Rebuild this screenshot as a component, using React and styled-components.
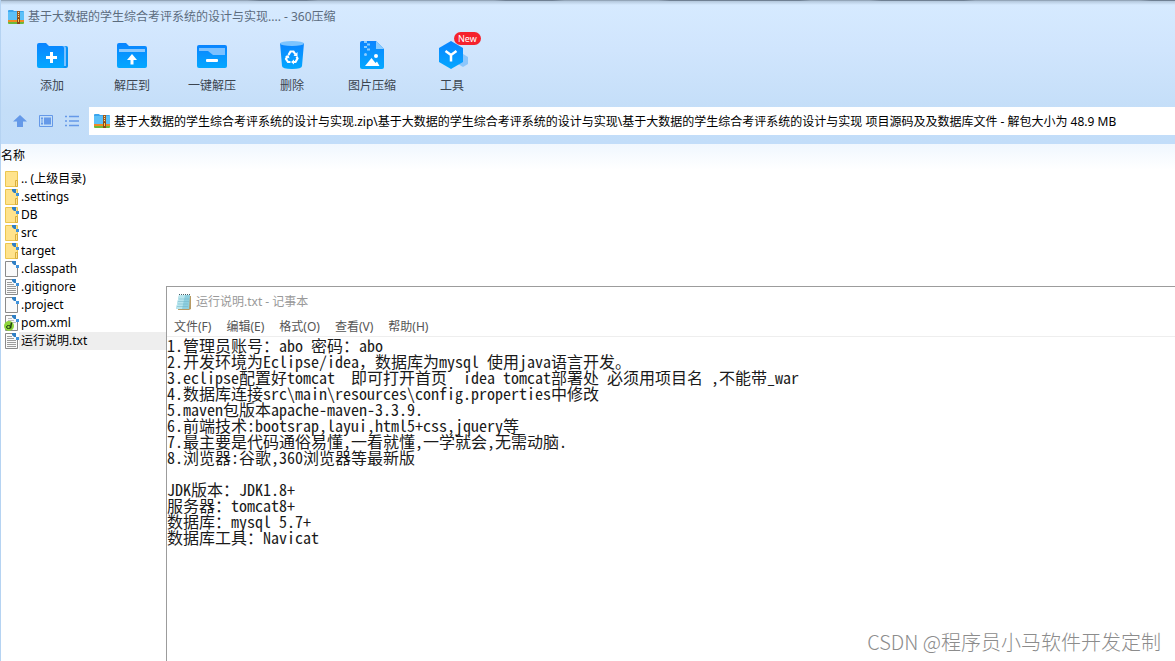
import React from 'react'
import styled, { createGlobalStyle, css } from 'styled-components'

const TITLE = '基于大数据的学生综合考评系统的设计与实现'

const FILES = [
    { name: '.. (上级目录)', kind: 'up' },
    { name: '.settings', kind: 'folder' },
    { name: 'DB', kind: 'folder' },
    { name: 'src', kind: 'folder' },
    { name: 'target', kind: 'folder' },
    { name: '.classpath', kind: 'blank' },
    { name: '.gitignore', kind: 'text' },
    { name: '.project', kind: 'blank' },
    { name: 'pom.xml', kind: 'xml' },
    { name: '运行说明.txt', kind: 'text', selected: true },
]

const MENU = ['文件(F)', '编辑(E)', '格式(O)', '查看(V)', '帮助(H)']

const NOTE = [
    '1.管理员账号：abo 密码：abo',
    '2.开发环境为Eclipse/idea，数据库为mysql 使用java语言开发。',
    '3.eclipse配置好tomcat  即可打开首页  idea tomcat部署处 必须用项目名 ,不能带_war',
    '4.数据库连接src\\main\\resources\\config.properties中修改',
    '5.maven包版本apache-maven-3.3.9.',
    '6.前端技术:bootsrap,layui,html5+css,jquery等',
    '7.最主要是代码通俗易懂,一看就懂,一学就会,无需动脑.',
    '8.浏览器:谷歌,360浏览器等最新版',
    '',
    'JDK版本：JDK1.8+',
    '服务器：tomcat8+',
    '数据库：mysql 5.7+',
    '数据库工具：Navicat',
].join('\n')

/**
 * Icons
 */
const Blue = () => (
    <defs>
        <linearGradient id="blue" x1="0" y1="0" x2="0" y2="1">
            <stop offset="0" stopColor="#0a84ff" />
            <stop offset="1" stopColor="#04a8ff" />
        </linearGradient>
    </defs>
)

const ZipIcon = () => (
    <svg width="16" height="14" viewBox="0 0 16 14">
        <path d="M0 1q0-1 1-1h4l1 1h9q1 0 1 1v8H0z" fill="#3aa5ee" />
        <path d="M0 2h16v8H0z" fill="#5cc0f8" />
        <path d="M0 10h16v2H0z" fill="#f08a24" />
        <path d="M0 12h16v1q0 1-1 1H1q-1 0-1-1z" fill="#6cb83a" />
        <path d="M9 1h3v8H9z" fill="#9a5a20" />
        <path d="M10 2h1v1h-1zM10 4h1v1h-1zM10 6h1v1h-1z" fill="#ffdf9a" />
        <path d="M9 8h3v6H9z" fill="#8a4a17" />
        <path d="M10 9h1v3h-1z" fill="#ffc94a" />
    </svg>
)

const AddIcon = () => (
    <svg width="32" height="32" viewBox="0 0 32 32">
        <path d="M2 5h28q2 0 2 2v18q0 2-2 2H4z" fill="#0a93f5" />
        <path d="M12 5h16q2 0 2 2v18h-3z" fill="#7cc1ff" />
        <path d="M1 4q0-2 2-2h7l3 3h13q2 0 2 2v18q0 2-2 2H3q-2 0-2-2z" fill="url(#blue)" />
        <path d="M15.500 11v11M10 16.500h11" stroke="#fff" strokeWidth="3" />
    </svg>
)

const ExtractIcon = () => (
    <svg width="32" height="32" viewBox="0 0 32 32">
        <path d="M1 4q0-2 2-2h7l3 3h16q2 0 2 2v18q0 2-2 2H3q-2 0-2-2z" fill="url(#blue)" />
        <path d="M3 8h26v3H3z" fill="#8ac8ff" />
        <path d="M16 13l5 6h-3.500v4.500h-3V19H11z" fill="#fff" />
    </svg>
)

const OneKeyIcon = () => (
    <svg width="32" height="32" viewBox="0 0 32 32">
        <rect x="1" y="4" width="30" height="23" rx="2" fill="url(#blue)" />
        <path d="M3 7h26v7H17l-5-4H3z" fill="#7cc1ff" />
        <rect x="10" y="18" width="12" height="3" rx="1" fill="#fff" />
    </svg>
)

const TrashIcon = () => (
    <svg width="32" height="32" viewBox="0 0 32 32">
        <path d="M4 2l2 23q0 3 10 3t10-3l2-23z" fill="url(#blue)" />
        <ellipse cx="16" cy="2.500" rx="12" ry="2.500" fill="#7cc4ff" />
        <g fill="none" stroke="#fff" strokeWidth="2.200">
            <path d="M12.500 14l2-3.500h3l2 3" />
            <path d="M20.500 15.500l1 2-2 3.500h-2" />
            <path d="M14.500 21H12l-2-3 1.500-3" />
        </g>
        <path d="M21.500 11v4h-4zM18 18.500v5l-3-2.500zM9 15.500l3.500-1.500 1 3.500z" fill="#fff" />
    </svg>
)

const PictureIcon = () => (
    <svg width="32" height="32" viewBox="0 0 32 32">
        <path d="M4 2q0-2 2-2h14l8 8v18q0 2-2 2H6q-2 0-2-2z" fill="url(#blue)" />
        <path d="M20 0l8 8h-8z" fill="#8accff" />
        <path d="M8 1h3M11 3.500h3M8 6h3M11 8.500h3" stroke="#8accff" strokeWidth="2" />
        <circle cx="9.500" cy="13.500" r="1.500" fill="#8accff" />
        <circle cx="20" cy="15" r="2" fill="#fff" />
        <path d="M9 25l6.500-8 4 5 1.500-1.500 2.500 4.500z" fill="#fff" />
    </svg>
)

const ToolIcon = () => (
    <svg width="32" height="32" viewBox="0 0 32 32">
        <path d="M27 13l5 3v7l-5 3-5-3v-7z" fill="#8cc6fb" />
        <path d="M15 0l12 7v14l-12 7-12-7V7z" fill="url(#blue)" />
        <path d="M9.500 10l5.500 4 5.500-4M15 14v6.500" fill="none" stroke="#fff" strokeWidth="2.500" />
    </svg>
)

const UpIcon = () => (
    <svg width="14" height="14" viewBox="0 0 14 14">
        <path d="M7 1l7 6.500h-4V13H4V7.500H0z" fill="#6599e8" />
    </svg>
)

const PanelIcon = () => (
    <svg width="14" height="12" viewBox="0 0 14 12">
        <path d="M.5.500h13v11H.5z" fill="none" stroke="#6599e8" />
        <path d="M5 2.500h7v7H5zM2 2.500h2v2H2zM2 5.500h2v1H2zM2 7.500h2v2H2z" fill="#6599e8" />
    </svg>
)

const ListIcon = () => (
    <svg width="14" height="12" viewBox="0 0 14 12">
        <path d="M0 1.500h2M4 1.500h10M0 6h2M4 6h10M0 10.500h2M4 10.500h10" stroke="#6599e8" strokeWidth="1.500" />
    </svg>
)

const NoteIcon = () => (
    <svg width="16" height="18" viewBox="0 0 16 18">
        <path d="M3 3h12v13l-2 1H2z" fill="#b89b63" />
        <path d="M3 2h11l-1 14H0z" fill="#8fd0df" />
        <path d="M3 2h6L6 16H0z" fill="#b9e6ee" />
        <path d="M3 6h10M2 8.500h11M2 11h10M1 13.500h11" stroke="#6fb3c6" strokeWidth=".5" />
        <path d="M3 1.500h11" stroke="#46606a" strokeDasharray="1 1" />
    </svg>
)

const Pins = () => (
    <>
        <path d="M7 0h4v4H9L7 2z" fill="#2f7fc4" />
        <path d="M11 4h3v3h-3z" fill="#3f93dc" />
    </>
)

const FileIcon = ({ kind }) => {
    const folder = kind === 'up' || kind === 'folder'
    return (
        <svg width="18" height="18" viewBox="0 0 18 18">
            <g transform="translate(4 1)">
                {folder ? (
                    <>
                        <path d="M.5.500h12v15H.5z" fill="#ffe38c" stroke="#ecc64f" />
                        <path d="M10.500 9.500h2v6h-2z" fill="#ffe38c" stroke="#d9ae3c" />
                    </>
                ) : (
                    <path d="M.5.500h7l5 5v10H.5z" fill="#fafafa" stroke="#8a8a8a" />
                )}
                {kind === 'text' && <path d="M2 3.500h5M2 5.500h7M2 7.500h9M2 9.500h9M2 11.500h9M2 13.500h9" stroke="#9c9c9c" />}
                {kind === 'xml' && <path d="M3 3.500h4M3 5.500h6M3 7.500h8" stroke="#bdbdbd" />}
                {kind !== 'up' && <Pins />}
            </g>
            {kind === 'xml' && (
                <>
                    <circle cx="8" cy="12" r="5" fill="#8ed63c" />
                    <ellipse cx="7.500" cy="13" rx="2" ry="1.500" fill="none" stroke="#1c3a12" />
                    <path d="M10.500 8.500l-1 6" fill="none" stroke="#1c3a12" strokeWidth="1.500" />
                </>
            )}
        </svg>
    )
}

const TOOLS = [
    { label: '添加', Icon: AddIcon },
    { label: '解压到', Icon: ExtractIcon },
    { label: '一键解压', Icon: OneKeyIcon },
    { label: '删除', Icon: TrashIcon },
    { label: '图片压缩', Icon: PictureIcon },
    { label: '工具', Icon: ToolIcon, badge: 'New' },
]

/**
 * Archive window with the notepad window opened over it
 */
const App = () => (
    <>
        <GlobalStyle />
        <Desktop>
            <Header>
                <TitleBar>
                    <ZipIcon />
                    <span>{TITLE}.... - 360压缩</span>
                </TitleBar>
                <Toolbar>
                    {TOOLS.map(({ label, Icon, badge }) => (
                        <ToolButton key={label} type="button">
                            <Icon />
                            {label}
                            {badge && <Badge>{badge}</Badge>}
                        </ToolButton>
                    ))}
                </Toolbar>
                <AddressRow>
                    <NavButton type="button" aria-label="Up"><UpIcon /></NavButton>
                    <NavButton type="button" aria-label="Panel"><PanelIcon /></NavButton>
                    <NavButton type="button" aria-label="List"><ListIcon /></NavButton>
                    <AddressBox>
                        <ZipIcon />
                        <AddressInput
                            aria-label="Path"
                            defaultValue={`${TITLE}.zip\\${TITLE}\\${TITLE} 项目源码及及数据库文件 - 解包大小为 48.9 MB`}
                        />
                    </AddressBox>
                </AddressRow>
            </Header>
            <Content>
                <ColumnHeader>名称</ColumnHeader>
                <FileList>
                    {FILES.map(({ name, kind, selected }) => (
                        <li key={name}>
                            <FileRow type="button">
                                <FileIcon kind={kind} />
                                <FileName $selected={selected}>{name}</FileName>
                            </FileRow>
                        </li>
                    ))}
                </FileList>
            </Content>
            <Notepad>
                <NoteTitle>
                    <NoteIcon />
                    <span>运行说明.txt - 记事本</span>
                </NoteTitle>
                <MenuBar>
                    {MENU.map((item) => (
                        <MenuButton key={item} type="button">{item}</MenuButton>
                    ))}
                </MenuBar>
                <NoteText aria-label="运行说明.txt" defaultValue={NOTE} spellCheck={false} wrap="off" />
            </Notepad>
            <Watermark>CSDN @程序员小马软件开发定制</Watermark>
        </Desktop>
        <svg width="0" height="0"><Blue /></svg>
    </>
)
export default App

/**
 * Styled components
 */
const GlobalStyle = createGlobalStyle`
    * {
        box-sizing: border-box;
    }

    body {
        margin: 0;
        overflow: hidden;
    }

    svg {
        display: block;
        flex: none;
    }
`

const uiFont = css`
    font-family: "Noto Sans", "Noto Sans CJK SC", sans-serif;
    font-size: 12px;
    line-height: 18px;
`

const plainButton = css`
    ${uiFont}
    border: 0;
    padding: 0;
    background: none;
    color: inherit;
`

const Desktop = styled.div`
    ${uiFont}
    position: relative;
    display: flex;
    flex-direction: column;
    height: 100vh;
    overflow: hidden;
    border-left: 1px solid #b5d3f2;
    background: #fff;
    color: #000;
`

const Header = styled.header`
    padding: 2px 0 9px;
    background:
        linear-gradient(90deg, #93a5b8 21%, #6f8093 22% 26%, #93a5b8 27% 42%, #6f8093 43% 47%, #93a5b8 48% 56%, #6f8093 57% 68%, #93a5b8 69% 74%, #6f8093 75% 82%, #93a5b8 83% 97%, #6f8093 98%) 0 0 / 100% 1px no-repeat,
        linear-gradient(#a9bdd2 0, #d6eaff 5px, #d0e5fd 50px, #c4def8 110px, #c2ddf9 100%);
`

const TitleBar = styled.div`
    display: flex;
    align-items: center;
    gap: 4px;
    height: 30px;
    padding-left: 7px;
    color: #5c6c7e;
`

const Toolbar = styled.div`
    display: flex;
    height: 75px;
    padding: 9px 0 0 11px;
`

const ToolButton = styled.button`
    ${plainButton}
    position: relative;
    display: flex;
    flex-direction: column;
    align-items: center;
    gap: 4px;
    width: 80px;
    color: #3c4550;
`

const Badge = styled.span`
    position: absolute;
    top: -9px;
    left: 42px;
    padding: 0 4px;
    border-radius: 7px;
    background: #f5222d;
    color: #fff;
    font-size: 9px;
    line-height: 13px;
`

const AddressRow = styled.div`
    display: flex;
    align-items: center;
    height: 28px;
    padding-left: 6px;
`

const NavButton = styled.button`
    ${plainButton}
    display: flex;
    justify-content: center;
    width: 26px;
`

const AddressBox = styled.div`
    display: flex;
    flex: 1;
    align-items: center;
    gap: 4px;
    height: 28px;
    margin-left: 4px;
    padding-left: 5px;
    background: #fff;
`

const AddressInput = styled.input`
    ${uiFont}
    flex: 1;
    min-width: 0;
    border: 0;
    padding: 2px 0 0;
    outline: 0;
    color: #000;
`

const Content = styled.main`
    flex: 1;
`

const ColumnHeader = styled.div`
    height: 26px;
    padding-top: 3px;
    background: linear-gradient(#f0f7fe, #fff);
`

const FileList = styled.ul`
    margin: 0;
    padding: 0;
    list-style: none;
`

const FileRow = styled.button`
    ${plainButton}
    display: flex;
    width: 100%;
    text-align: left;
`

const FileName = styled.span`
    flex: 1;
    padding-left: 2px;
    background: ${({ $selected }) => ($selected ? '#eee' : 'none')};
`

const Notepad = styled.section`
    position: absolute;
    top: 286px;
    right: 0;
    bottom: 0;
    left: 165px;
    display: flex;
    flex-direction: column;
    border: solid #9c9c9c;
    border-width: 1px 0 0 1px;
    background: #fff;
`

const NoteTitle = styled.div`
    display: flex;
    align-items: center;
    gap: 4px;
    height: 29px;
    padding-left: 9px;
    color: #999;
`

const MenuBar = styled.div`
    display: flex;
    gap: 15px;
    height: 21px;
    padding: 2px 0 0 7px;
    border-bottom: 1px solid #eee;
    color: #555;
`

const MenuButton = styled.button`
    ${plainButton}
`

const NoteText = styled.textarea`
    flex: 1;
    border: 0;
    padding: 0;
    outline: 0;
    resize: none;
    overflow: hidden;
    color: #1a1a1a;
    font-family: "Noto Sans Mono CJK SC", "Noto Sans CJK SC", monospace;
    font-size: 16px;
    line-height: 16px;
`

const Watermark = styled.div`
    position: absolute;
    right: 14px;
    bottom: 4px;
    color: #8c8c8c;
    font-family: "Noto Sans CJK SC", sans-serif;
    font-size: 20px;
    font-weight: 300;
    line-height: 30px;
`
